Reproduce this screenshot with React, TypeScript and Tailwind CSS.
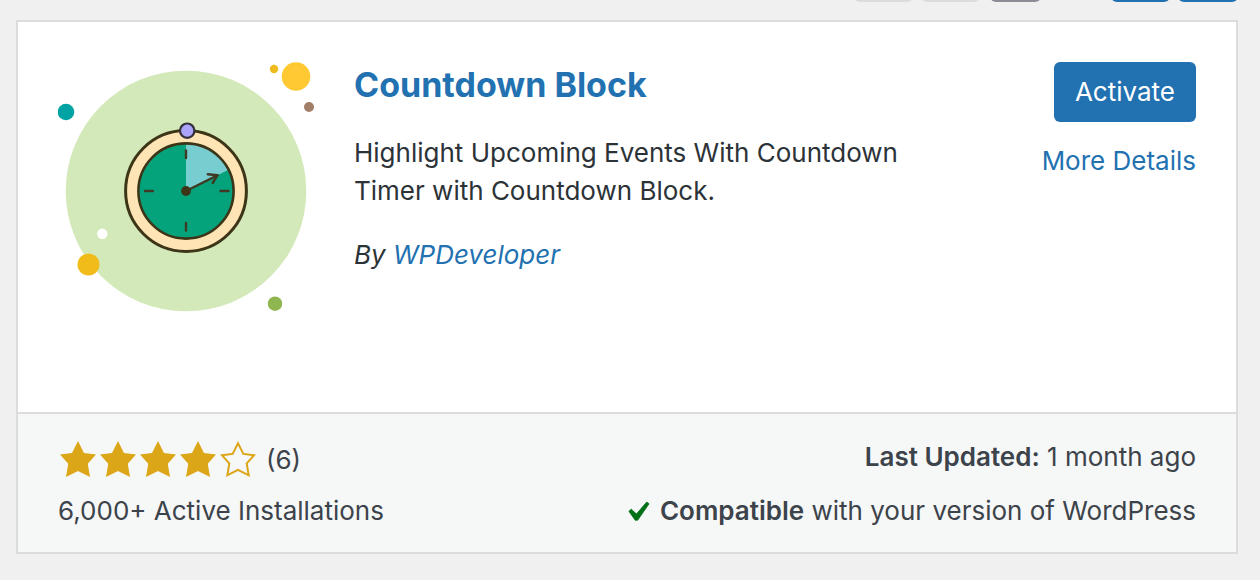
import React from "react";

function PluginIcon() {
  return (
    <svg viewBox="0 0 256 256" className="size-64 shrink-0" role="img" aria-label="Countdown Block">
      <circle cx="128" cy="129" r="120.3" fill="#d3e9b9" />
      <circle cx="8" cy="50" r="8.3" fill="#00a3a3" />
      <circle cx="216" cy="7" r="4.2" fill="#f0bb1c" />
      <circle cx="238" cy="14.5" r="14.3" fill="#ffc933" />
      <circle cx="251" cy="45" r="5" fill="#a07e68" />
      <circle cx="44.3" cy="171.8" r="5.2" fill="#fff" />
      <circle cx="30.5" cy="202.5" r="11" fill="#f1bb1a" />
      <circle cx="217" cy="241.7" r="7.2" fill="#8fb651" />
      <circle cx="128" cy="129" r="60.4" fill="#ffe5b5" stroke="#3d3518" strokeWidth="3" />
      <circle cx="128" cy="129" r="47.4" fill="#04a37c" />
      <path d="M128 129 V82 A47 47 0 0 1 170 108 Z" fill="#78cdd0" />
      <circle cx="128" cy="129" r="47.6" fill="none" stroke="#3d3518" strokeWidth="2.6" />
      <g stroke="#403924" strokeWidth="2.4" strokeLinecap="round" strokeLinejoin="round" fill="none">
        <path d="M128 88.5 V96" />
        <path d="M128 161 V168.5" />
        <path d="M87 129 H95" />
        <path d="M162.5 129 H170.5" />
        <path d="M128 129 L159.5 113.2" />
        <path d="M149.8 112.2 L159.5 113.2 L154.7 121" />
      </g>
      <circle cx="128" cy="129" r="4.9" fill="#3d3518" />
      <circle cx="129.2" cy="68.7" r="7.2" fill="#aaa5fb" stroke="#35313a" strokeWidth="2.2" />
    </svg>
  );
}

const STAR_FILLED = "M10 1l3 6 6 .75-4.12 4.62L16 19l-6-3-6 3 1.13-6.63L1 7.75 7 7z";
const STAR_EMPTY =
  "M10 1L7 7l-6 .75 4.13 4.62L4 19l6-3 6 3-1.12-6.63L19 7.75 13 7zm0 2.24l2.34 4.69 4.65.58-3.18 3.56.87 5.15L10 14.88l-4.68 2.34.87-5.15-3.18-3.56 4.65-.58z";

function Star({ filled }: { filled: boolean }) {
  return (
    <svg viewBox="0 0 20 20" className="size-10" aria-hidden="true">
      <path d={filled ? STAR_FILLED : STAR_EMPTY} fillRule="evenodd" fill="#dba617" />
    </svg>
  );
}

export default function App() {
  return (
    <div className="min-h-screen bg-[#f0f0f0] pr-[22px] pl-4 font-['Inter',sans-serif] text-[26px] leading-[38px] text-[#2c3338]">
      <div className="flex h-5 items-start justify-end" aria-hidden="true">
        <div className="flex h-[2px] items-end overflow-hidden">
          <span className="mr-2 h-10 w-[59px] rounded-md bg-[#dcdcde]" />
          <span className="mr-[10px] h-10 w-[59px] rounded-md bg-[#dcdcde]" />
          <span className="mr-[70px] h-10 w-[51px] rounded-md bg-[#8f8b96]" />
          <span className="mr-2 h-10 w-[59px] rounded-md bg-[#2271b1]" />
          <span className="h-10 w-[60px] rounded-md bg-[#2271b1]" />
        </div>
      </div>

      <article className="border-2 border-[#dcdcde] bg-white">
        <div className="flex min-h-[390px] items-start p-10">
          <PluginIcon />
          <div className="ml-10 flex-1">
            <h3 className="text-[34px] leading-[46px] font-bold">
              <a href="#details" className="text-[#2271b1]">Countdown Block</a>
            </h3>
            <p className="mt-[26px] max-w-[580px]">
              Highlight Upcoming Events With Countdown Timer with Countdown Block.
            </p>
            <p className="mt-[26px] italic">
              By <a href="#author" className="text-[#2271b1]">WPDeveloper</a>
            </p>
          </div>
          <div className="flex flex-col items-end gap-5">
            <button type="button" className="h-[60px] rounded-md bg-[#2271b1] px-[21px] text-white">
              Activate
            </button>
            <a href="#more" className="text-[#2271b1]">More Details</a>
          </div>
        </div>

        <footer className="flex justify-between border-t-2 border-[#dcdcde] bg-[#f6f7f7] px-10 pt-6 pb-[22px] text-[#3c434a]">
          <div className="flex flex-col justify-between">
            <div className="flex h-[41px] items-end">
              <div className="flex" role="img" aria-label="4 out of 5 stars">
                <Star filled />
                <Star filled />
                <Star filled />
                <Star filled />
                <Star filled={false} />
              </div>
              <span className="ml-2">(6)</span>
            </div>
            <p>6,000+ Active Installations</p>
          </div>
          <div className="flex flex-col items-end gap-4">
            <p>
              <strong className="font-semibold">Last Updated:</strong> 1 month ago
            </p>
            <p className="flex items-center gap-[10px]">
              <svg viewBox="5.5 4 11 11" className="size-[22px]" aria-hidden="true">
                <path
                  d="M14.83 5.05l1.2.85-5.7 8.2H9.1L5.95 9.67l1.17-1.1 2.6 2.4z"
                  fill="#007017"
                  stroke="#007017"
                  strokeWidth=".4"
                  strokeLinejoin="round"
                />
              </svg>
              <span>
                <strong className="font-semibold">Compatible</strong> with your version of WordPress
              </span>
            </p>
          </div>
        </footer>
      </article>
    </div>
  );
}
